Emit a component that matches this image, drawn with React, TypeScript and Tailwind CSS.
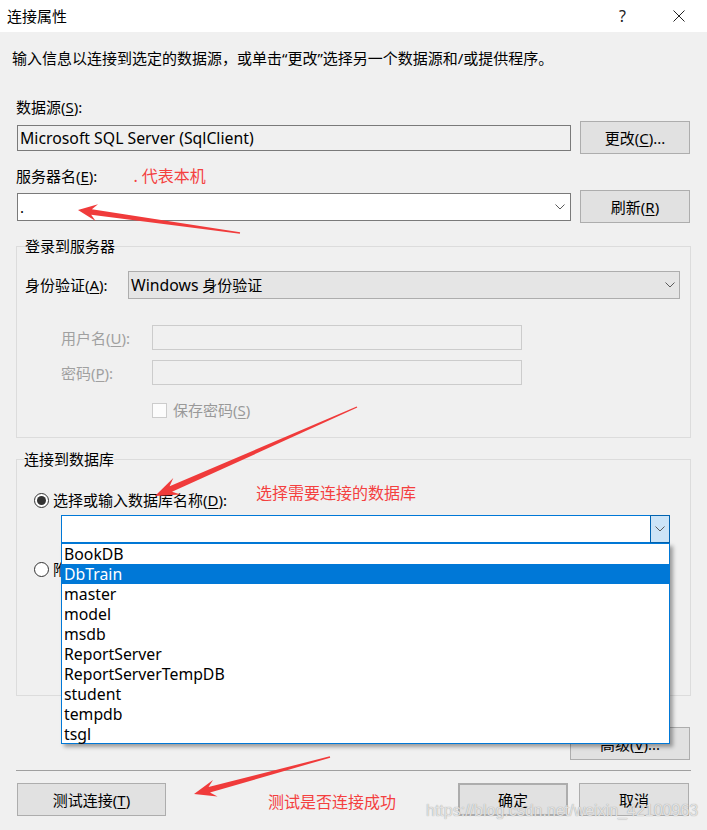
import React from "react";

const FONT = "font-['Noto_Sans','Noto_Sans_CJK_SC',sans-serif]";

function Chevron({ className = "" }: { className?: string }) {
  return (
    <svg width="10" height="6" viewBox="0 0 10 6" className={className}>
      <polyline points="0.5,0.5 5,5 9.5,0.5" fill="none" stroke="#5a5a5a" strokeWidth="1" />
    </svg>
  );
}

function Btn({ children, className = "" }: { children: React.ReactNode; className?: string }) {
  return (
    <div
      className={`h-[33px] flex items-center justify-center bg-[#e1e1e1] border border-[#adadad] text-[15px] leading-[20px] text-black ${className}`}
    >
      {children}
    </div>
  );
}

function arrowPoints(tx: number, ty: number, px: number, py: number, L: number, W: number, s0: number, s1: number) {
  const dx = px - tx;
  const dy = py - ty;
  const len = Math.hypot(dx, dy);
  const ux = dx / len;
  const uy = dy / len;
  const nx = -uy;
  const ny = ux;
  const bx = px - ux * L;
  const by = py - uy * L;
  const jx = px - ux * L * 0.72;
  const jy = py - uy * L * 0.72;
  const pts = [
    [tx + nx * s0, ty + ny * s0],
    [jx + nx * s1, jy + ny * s1],
    [bx + nx * W, by + ny * W],
    [px, py],
    [bx - nx * W, by - ny * W],
    [jx - nx * s1, jy - ny * s1],
    [tx - nx * s0, ty - ny * s0],
  ];
  return pts.map((p) => `${p[0].toFixed(1)},${p[1].toFixed(1)}`).join(" ");
}

const dbs = ["BookDB", "DbTrain", "master", "model", "msdb", "ReportServer", "ReportServerTempDB", "student", "tempdb", "tsgl"];

export default function App() {
  return (
    <div className={`relative w-[707px] h-[830px] overflow-hidden bg-[#f0f0f0] text-black ${FONT}`}>
      {/* title bar */}
      <div className="h-[32px] bg-white flex items-center pl-[7px] text-[15px] leading-[20px]">
        <span>连接属性</span>
        <span className="ml-auto text-[16px] text-[#222]">?</span>
        <svg width="12" height="12" viewBox="0 0 12 12" className="ml-[47px] mr-[22px]">
          <line x1="0.5" y1="0.5" x2="11.5" y2="11.5" stroke="#222" strokeWidth="1" />
          <line x1="11.5" y1="0.5" x2="0.5" y2="11.5" stroke="#222" strokeWidth="1" />
        </svg>
      </div>

      <div className="px-[16px] flex flex-col text-[15px] leading-[20px]">
        <div className="mt-[16px] -ml-[4px]">
          输入信息以连接到选定的数据源，或单击“更改”选择另一个数据源和/或提供程序。
        </div>

        <div className="mt-[29px]">
          数据源(<span className="underline underline-offset-2">S</span>):
        </div>
        <div className="mt-[4px] flex items-center">
          <div className="ml-[1px] w-[554px] h-[26px] border border-[#7a7a7a] bg-[#f0f0f0] flex items-center pl-[2px] text-[15.8px]">
            Microsoft SQL Server (SqlClient)
          </div>
          <Btn className="ml-[9px] w-[110px]">
            更改(<span className="underline underline-offset-2">C</span>)...
          </Btn>
        </div>

        <div className="mt-[12px] flex items-center">
          <span>
            服务器名(<span className="underline underline-offset-2">E</span>):
          </span>
          <span className="ml-[36px] text-[16px] text-[#f4403f]">. 代表本机</span>
        </div>
        <div className="mt-[4px] flex items-center">
          <div className="ml-[1px] w-[554px] h-[28px] border border-[#7a7a7a] bg-white flex items-center pl-[2px] pr-[5px]">
            <span>.</span>
            <Chevron className="ml-auto" />
          </div>
          <Btn className="ml-[9px] w-[110px]">
            刷新(<span className="underline underline-offset-2">R</span>)
          </Btn>
        </div>

        {/* login group */}
        <fieldset className="mt-[13px] border border-[#dcdcdc] pt-[15px] pb-[17px]">
          <legend className="ml-[8px] leading-[20px]">登录到服务器</legend>
          <div className="flex items-center">
            <span className="w-[111px] pl-[8px]">
              身份验证(<span className="underline underline-offset-2">A</span>):
            </span>
            <div className="w-[552px] h-[28px] border border-[#adadad] bg-[#e5e5e5] flex items-center pl-[2px] pr-[4px]">
              <span>
                <span className="text-[15.8px]">Windows</span> 身份验证
              </span>
              <Chevron className="ml-auto" />
            </div>
          </div>
          <div className="mt-[26px] flex items-center text-[#a0a0a0]">
            <span className="w-[135px] pl-[44px]">
              用户名(<span className="underline underline-offset-2">U</span>):
            </span>
            <div className="w-[370px] h-[25px] border border-[#cccccc] bg-[#f0f0f0]" />
          </div>
          <div className="mt-[10px] flex items-center text-[#a0a0a0]">
            <span className="w-[135px] pl-[44px]">
              密码(<span className="underline underline-offset-2">P</span>):
            </span>
            <div className="w-[370px] h-[25px] border border-[#cccccc] bg-[#f0f0f0]" />
          </div>
          <div className="mt-[15px] ml-[135px] flex items-center text-[#999999]">
            <div className="w-[15px] h-[15px] border border-[#cccccc] bg-[#fcfcfc]" />
            <span className="ml-[6px]">
              保存密码(<span className="underline underline-offset-2">S</span>)
            </span>
          </div>
        </fieldset>

        {/* database group */}
        <fieldset className="mt-[11px] border border-[#dcdcdc] pt-[21px] pb-[116px]">
          <legend className="ml-[7px] leading-[20px]">连接到数据库</legend>
          <div className="h-[20px] ml-[17px] flex items-center">
            <div className="w-[15px] h-[15px] rounded-full border border-[#333] bg-white flex items-center justify-center">
              <div className="w-[9px] h-[9px] rounded-full bg-[#333]" />
            </div>
            <span className="ml-[4px]">
              选择或输入数据库名称(<span className="underline underline-offset-2">D</span>):
            </span>
            <span className="ml-[29px] mb-[14px] text-[16px] text-[#f4403f]">选择需要连接的数据库</span>
          </div>
          <div className="relative mt-[5px] ml-[44px] w-[609px] h-[28px] border border-[#0078d7] bg-white flex">
            <div className="flex-1" />
            <div className="w-[20px] -my-[1px] -mr-[1px] border border-[#0063b1] bg-[#cce4f7] flex items-center justify-center">
              <Chevron />
            </div>
            {/* dropdown list */}
            <div className="absolute z-10 -left-[1px] top-[27px] w-[609px] h-[201px] border border-[#0078d7] bg-white shadow-[3px_3px_4px_rgba(0,0,0,0.35)] flex flex-col text-[15.8px]">
              {dbs.map((d) => (
                <div
                  key={d}
                  className={
                    d === "DbTrain"
                      ? "h-[20px] leading-[20px] pl-[2px] bg-[#0078d7] text-white"
                      : "h-[20px] leading-[20px] pl-[2px] text-black"
                  }
                >
                  {d}
                </div>
              ))}
            </div>
          </div>
          <div className="mt-[16px] h-[20px] ml-[17px] flex items-center">
            <div className="w-[15px] h-[15px] rounded-full border border-[#333] bg-white" />
            <span className="ml-[4px]">
              附加数据库文件(<span className="underline underline-offset-2">H</span>):
            </span>
          </div>
        </fieldset>

        <Btn className="mt-[31px] self-end mr-[1px] w-[120px]">
          高级(<span className="underline underline-offset-2">V</span>)...
        </Btn>

        <div className="mt-[10px] h-[1px] bg-[#a0a0a0]" />

        <div className="mt-[12px] flex items-center">
          <Btn className="ml-[1px] w-[149px]">
            测试连接(<span className="underline underline-offset-2">T</span>)
          </Btn>
          <span className="ml-[102px] mt-[5px] text-[16px] text-[#f4403f]">测试是否连接成功</span>
          <Btn className="ml-auto w-[110px] border-2 border-[#0078d7]">确定</Btn>
          <Btn className="ml-[11px] mr-[2px] w-[110px]">取消</Btn>
        </div>
      </div>

      {/* watermark */}
      <div className="absolute left-[426px] top-[801px] font-['Liberation_Sans',Arial,sans-serif] text-[16px] leading-[20px] text-[rgba(240,240,240,0.85)] [text-shadow:0_0_1px_#8a8a8a] pointer-events-none">
        https://blog.csdn.net/weixin_42100963
      </div>

      {/* annotation arrows */}
      <svg className="absolute inset-0 z-20 pointer-events-none" width="707" height="830" viewBox="0 0 707 830">
        <polygon points={arrowPoints(240, 233, 78, 210, 19, 8.5, 0.7, 2.8)} fill="#f03b3b" />
        <polygon points={arrowPoints(357, 407, 155, 496, 24, 9, 0.7, 3)} fill="#f03b3b" />
        <polygon points={arrowPoints(330, 757, 194, 794, 22, 8.5, 0.7, 2.8)} fill="#f03b3b" />
      </svg>
    </div>
  );
}
